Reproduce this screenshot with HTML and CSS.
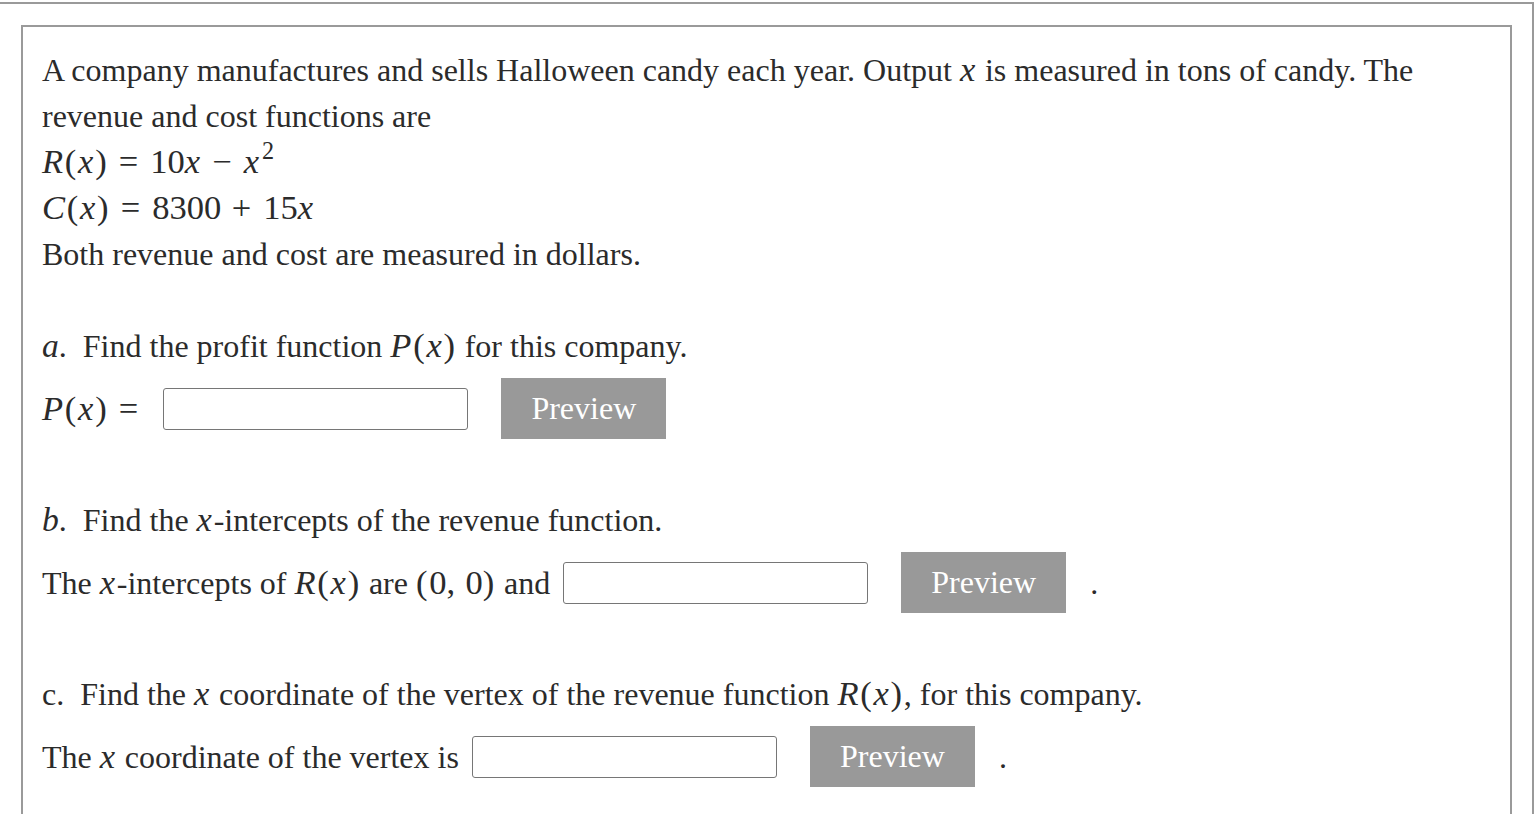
FILE: index.html
```html
<!DOCTYPE html>
<html lang="en">
<head>
  <meta charset="UTF-8" />
  <meta name="viewport" content="width=device-width, initial-scale=1.0"/>
  <title>Halloween Candy - Revenue and Cost</title>
  <link rel="stylesheet" href="styles.css">
</head>
<body>
  <div class="frame">
    <div class="question">
      <p class="intro">
        A company manufactures and sells Halloween candy each year. Output <span class="math"><span class="mi">x</span></span> is measured in tons of candy. The revenue and cost functions are<br>
        <span class="math"><span class="mi">R</span>(<span class="mi">x</span>)<span class="op">=</span><span class="mn">10</span><span class="mi">x</span><span class="op">&minus;</span><span class="mi">x</span><sup>2</sup></span><br>
        <span class="math"><span class="mi">C</span>(<span class="mi">x</span>)<span class="op">=</span><span class="mn">8300</span><span class="op">+</span><span class="mn">15</span><span class="mi">x</span></span><br>
        Both revenue and cost are measured in dollars.
      </p>

      <div class="part part-first">
        <p class="prompt"><span class="label mi">a</span>. &nbsp;Find the profit function <span class="math"><span class="mi">P</span>(<span class="mi">x</span>)</span> for this company.</p>
        <div class="answer-row">
          <span class="math"><span class="mi">P</span>(<span class="mi">x</span>)<span class="op">=</span></span>
          <input type="text" class="answer-input" aria-label="P(x)">
          <button class="preview">Preview</button>
        </div>
      </div>

      <div class="part">
        <p class="prompt"><span class="label mi">b</span>. &nbsp;Find the <span class="math"><span class="mi">x</span></span>-intercepts of the revenue function.</p>
        <div class="answer-row">
          <span>The <span class="math"><span class="mi">x</span></span>-intercepts of <span class="math"><span class="mi">R</span>(<span class="mi">x</span>)</span> are <span class="math">(<span class="mn">0</span>,&thinsp;<span class="mn">0</span>)</span> and</span>
          <input type="text" class="answer-input" aria-label="second intercept">
          <button class="preview">Preview</button>
          <span class="stop">.</span>
        </div>
      </div>

      <div class="part">
        <p class="prompt">c. &nbsp;Find the <span class="math"><span class="mi">x</span></span> coordinate of the vertex of the revenue function <span class="math"><span class="mi">R</span>(<span class="mi">x</span>)</span>, for this company.</p>
        <div class="answer-row">
          <span>The <span class="math"><span class="mi">x</span></span> coordinate of the vertex is</span>
          <input type="text" class="answer-input" aria-label="vertex x coordinate">
          <button class="preview">Preview</button>
          <span class="stop">.</span>
        </div>
      </div>
    </div>
  </div>
</body>
</html>
```

FILE: styles.css
```css
body {
  margin: 0;
  font-family: 'Liberation Serif', 'Times New Roman', serif;
  color: #2b2b2b;
  background-color: #fff;
  overflow: hidden;
}

.frame {
  border-top: 2px solid #9a9a9a;
  border-right: 2px solid #9a9a9a;
  margin: 2px 6px 0 0;
  padding: 21px 20px 0 21px;
  height: 840px;
  box-sizing: border-box;
}

.question {
  border: 2px solid #9a9a9a;
  border-bottom: none;
  padding: 20px 19px 40px;
  font-size: 32px;
  line-height: 46px;
  height: 100%;
  box-sizing: border-box;
}

p {
  margin: 0;
}

.math {
  font-size: 1.08em;
  letter-spacing: 0.05em;
  line-height: 1;
}

.mi {
  font-style: italic;
}

.mn {
  letter-spacing: 0;
}

.label {
  font-size: 1.05em;
  line-height: 1;
}

.math sup {
  font-size: 0.7em;
  line-height: 0;
  vertical-align: 0.6em;
  margin-left: 1px;
}

.op {
  padding: 0 0.3em;
}

.part {
  margin-top: 58px;
}

.part-first {
  margin-top: 46px;
}

.answer-row {
  display: flex;
  align-items: center;
  height: 61px;
  margin-top: 9px;
}

.answer-input {
  width: 305px;
  height: 42px;
  box-sizing: border-box;
  border: 1.5px solid #767676;
  border-radius: 3px;
  margin-left: 13px;
  font: inherit;
  padding: 0 6px;
  background: #fff;
}

.preview {
  width: 165px;
  height: 61px;
  margin-left: 33px;
  border: none;
  background-color: #999;
  color: #fff;
  font-family: inherit;
  font-size: 32px;
  padding: 0;
}

.stop {
  margin-left: 24px;
}
```
